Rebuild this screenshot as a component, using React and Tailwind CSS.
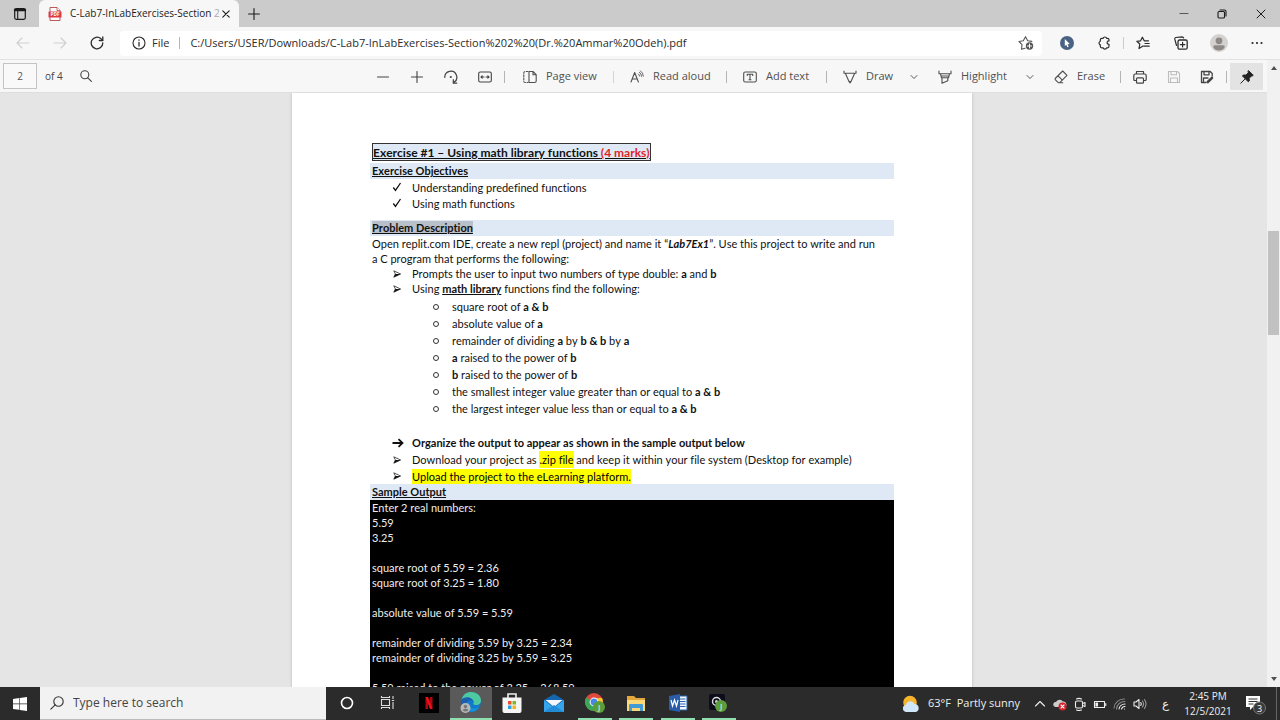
import React from "react";

function Icon({ children, className = "size-4", viewBox = "0 0 16 16" }) {
  return (
    <svg viewBox={viewBox} className={`shrink-0 ${className}`} fill="none" stroke="currentColor" strokeWidth="1.1" strokeLinecap="round" strokeLinejoin="round" aria-hidden="true">
      {children}
    </svg>
  );
}

function IconButton({ label, className = "w-[34px]", children }) {
  return (
    <button type="button" aria-label={label} className={`flex h-full shrink-0 items-center justify-center ${className}`}>
      {children}
    </button>
  );
}

function LabelButton({ label, className, children }) {
  return (
    <button type="button" className={`flex h-full shrink-0 items-center gap-[9px] whitespace-nowrap text-[11px] text-[#505050] ${className}`}>
      {children}
      {label}
    </button>
  );
}

function Sep({ className = "" }) {
  return <div className={`h-3 w-px shrink-0 bg-[#b4b4b4] ${className}`} />;
}

function ChevronDown() {
  return (
    <Icon className="size-2" viewBox="0 0 8 8">
      <path d="M1 2.5 4 5.5 7 2.5" strokeWidth="0.9" />
    </Icon>
  );
}

function TabStrip() {
  return (
    <header className="flex h-[27px] shrink-0 items-center bg-[#cbcbcb] text-[#1b1b1b]">
      <IconButton label="Tab actions" className="w-[39px]">
        <Icon className="size-3.5" viewBox="0 0 14 14">
          <rect x="1.7" y="1.7" width="10.6" height="10.6" rx="1.5" strokeWidth="1.2" />
          <path d="M2 3h10" strokeWidth="2.4" />
          <path d="M4.7 4v8" />
        </Icon>
      </IconButton>
      <div className="flex h-full w-[200px] shrink-0 items-center rounded-t-md bg-[#f7f7f7] pl-[9px]">
        <svg viewBox="0 0 14 14" className="size-3.5 shrink-0" aria-hidden="true">
          <path d="M2 .5h7L12 3.500V13.500H2z" fill="#fff" stroke="#a33" strokeWidth=".8" />
          <path d="M9 .5V3.500h3" fill="#fff" stroke="#a33" strokeWidth=".7" />
          <rect x="0.500" y="4.500" width="13" height="6" rx=".6" fill="#dc3b42" />
          <text x="7" y="9.200" textAnchor="middle" fontSize="4.600" fontWeight="700" fill="#fff" fontFamily="Open Sans, sans-serif">PDF</text>
        </svg>
        <span className="ml-2 min-w-0 flex-1 text-[10px] whitespace-nowrap">
          C-Lab7-InLabExercises-Section <span className="text-[#aaa]">2</span>
        </span>
        <IconButton label="Close tab" className="w-[26px]">
          <Icon className="size-2" viewBox="0 0 8 8"><path d="m.8.8 6.400 6.400M7.200.8.8 7.200" /></Icon>
        </IconButton>
      </div>
      <IconButton label="New tab" className="w-[30px]">
        <Icon className="size-3" viewBox="0 0 12 12"><path d="M6 .6v10.800M.6 6h10.800" /></Icon>
      </IconButton>
      <div className="ml-auto flex h-full">
        <IconButton label="Minimize" className="w-[38px]">
          <Icon className="size-2.5 text-[#555]" viewBox="0 0 10 10"><path d="M1 4.500h8" strokeWidth="1" /></Icon>
        </IconButton>
        <IconButton label="Restore" className="w-[38px]">
          <Icon className="size-2.5" viewBox="0 0 10 10">
            <rect x="1" y="2.500" width="6.500" height="6.500" rx="1" />
            <path d="M3 1h4.500Q9 1 9 2.500V7" />
          </Icon>
        </IconButton>
        <IconButton label="Close" className="w-[39px]">
          <Icon className="size-2.5" viewBox="0 0 10 10"><path d="m1 1 8 8M9 1 1 9" strokeWidth="1" /></Icon>
        </IconButton>
      </div>
    </header>
  );
}

function AddressBar() {
  return (
    <div className="flex h-8 shrink-0 items-center bg-[#f7f7f7] pl-1 text-[#2b2b2b]">
      <IconButton label="Back" className="w-[37px] text-[#cfcfcf]">
        <Icon className="size-3.5" viewBox="0 0 14 14"><path d="M13 7H1M6 2 1 7l5 5" /></Icon>
      </IconButton>
      <IconButton label="Forward" className="w-[37px] text-[#cfcfcf]">
        <Icon className="size-3.5" viewBox="0 0 14 14"><path d="M1 7h12M8 2l5 5-5 5" /></Icon>
      </IconButton>
      <IconButton label="Refresh" className="w-[37px]">
        <Icon className="size-3.5" viewBox="0 0 14 14">
          <path d="M12.800 7A5.800 5.800 0 1 1 10.800 2.600L12.600 4.400" strokeWidth="1.300" />
          <path d="M12.800 1v3.500H9.300" strokeWidth="1.300" />
        </Icon>
      </IconButton>
      <div className="ml-[5px] flex h-[25px] min-w-0 flex-1 items-center rounded bg-white pl-3">
        <Icon className="size-3.5" viewBox="0 0 14 14">
          <circle cx="7" cy="7" r="6" />
          <path d="M7 6.300v3.800M7 4v.3" strokeWidth="1.300" />
        </Icon>
        <span className="ml-1.5 text-[11px]">File</span>
        <Sep className="ml-2.5 bg-[#777]" />
        <input aria-label="Address" defaultValue="C:/Users/USER/Downloads/C-Lab7-InLabExercises-Section%202%20(Dr.%20Ammar%20Odeh).pdf" className="ml-2.5 min-w-0 flex-1 bg-transparent text-[11px] outline-none" />
        <IconButton label="Add to favorites" className="w-8">
          <Icon className="size-4 text-[#555]">
            <path d="M7 13.200 3.500 14.200 4 9.700 1 6.500 5.300 5.700 7.500 1.700 9.700 5.700 13.800 6.400" />
            <circle cx="11.500" cy="11" r="3.700" fill="currentColor" stroke="none" />
            <path d="M11.500 9v4M9.500 11h4" stroke="#fff" strokeWidth="1" />
          </Icon>
        </IconButton>
      </div>
      <div className="ml-1.5 flex h-full items-center">
        <IconButton label="Cursor extension" className="w-[37px]">
          <svg viewBox="0 0 14 14" className="size-3.5" aria-hidden="true">
            <circle cx="7" cy="7" r="7" fill="#4b6383" />
            <path d="m4.800 3 5 5-2.200.2 1 2.500-1.300.5-1-2.500-1.500 1.300z" fill="#fff" />
          </svg>
        </IconButton>
        <IconButton label="Extensions" className="w-[38px]">
          <Icon className="size-3.5" viewBox="0 0 14 14">
            <path d="M3.300 3.800q0-1.500 1.500-1.500h1.300a1.900 1.900 0 0 1 3.600 0h.8q1.500 0 1.500 1.500v1.100a1.700 1.700 0 0 0-1 3.200q.5.300 1 .2v2q0 1.500-1.500 1.500h-.8a1.900 1.900 0 0 1-3.600 0H4.800q-1.500 0-1.500-1.500V8.900a1.900 1.900 0 0 1 0-3.600z" strokeWidth="1.200" />
          </Icon>
        </IconButton>
        <Sep className="bg-[#ccc]" />
        <IconButton label="Favorites" className="w-[38px]">
          <Icon className="size-3.5" viewBox="0 0 14 14">
            <path d="M7 10 3 12.500 3.800 8 .8 5.300 4.600 4.800 6.400 1.200 8.200 4.800H12.500M9 7.500h4.200M8 10.200h5.200" strokeWidth="1.200" />
          </Icon>
        </IconButton>
        <IconButton label="Collections" className="w-[38px]">
          <Icon className="size-3.5" viewBox="0 0 14 14">
            <rect x="4" y="4" width="9.200" height="9.200" rx="1.500" strokeWidth="1.300" />
            <path d="M8.600 6.300v4.600M6.300 8.600h4.600M2.500 9.500.8 3.200q-.2-1.400 1-1.700L8 .8q1.300 0 1.600 1.200" strokeWidth="1.200" />
          </Icon>
        </IconButton>
        <IconButton label="Profile" className="w-[38px]">
          <svg viewBox="0 0 18 18" className="size-[18px]" aria-hidden="true">
            <circle cx="9" cy="9" r="9" fill="#d4d1ce" />
            <circle cx="9" cy="6.800" r="3.400" fill="#8d8986" />
            <path d="M3.200 13q0-1.800 1.800-1.800h8q1.800 0 1.800 1.800-1.700 3.500-5.800 3.500T3.200 13z" fill="#8d8986" />
          </svg>
        </IconButton>
        <IconButton label="Settings and more" className="mr-1 w-[38px]">
          <Icon className="size-3" viewBox="0 0 12 12">
            <path d="M1.500 6h.01M6 6h.01M10.500 6h.01" strokeWidth="2.200" />
          </Icon>
        </IconButton>
      </div>
    </div>
  );
}

function PdfToolbar() {
  return (
    <div className="flex h-[33px] shrink-0 items-center border-b border-[#dedede] bg-[#f7f7f7] pl-[3px] text-[#444]">
      <input aria-label="Page number" defaultValue="2" className="h-[26px] w-[34px] shrink-0 border border-[#c4c4c4] bg-[#f9f9f9] text-center text-[10px] text-[#555] outline-none" />
      <span className="ml-2 text-[10px] whitespace-nowrap">of 4</span>
      <IconButton label="Find" className="ml-1.5 w-[34px]">
        <Icon className="size-3" viewBox="0 0 12 12"><circle cx="4.800" cy="4.800" r="4" /><path d="m7.800 7.800 3.600 3.600" /></Icon>
      </IconButton>
      <div className="mr-1 ml-auto flex h-full items-center pt-px">
        <IconButton label="Zoom out"><Icon className="size-3" viewBox="0 0 12 12"><path d="M.5 6h11" /></Icon></IconButton>
        <IconButton label="Zoom in"><Icon className="size-3" viewBox="0 0 12 12"><path d="M.5 6h11M6 .5v11" /></Icon></IconButton>
        <IconButton label="Rotate">
          <Icon className="size-3.5" viewBox="0 0 14 14">
            <path d="M.8 7.500A6 6 0 1 1 10 12.300M9.300 9.600v3.600h3.400" strokeWidth="1.200" />
            <circle cx="6.800" cy="7" r="1.100" fill="currentColor" stroke="none" />
          </Icon>
        </IconButton>
        <IconButton label="Fit to width">
          <Icon className="size-3.5" viewBox="0 0 14 14">
            <rect x=".7" y="2" width="12.600" height="10" rx="1.500" />
            <path d="M3 7h3M4.200 5.800 3 7l1.200 1.200M11 7H8M9.800 5.800 11 7 9.800 8.200" />
          </Icon>
        </IconButton>
        <Sep className="mx-0.5" />
        <LabelButton label="Page view" className="w-[106px] pl-4">
          <Icon className="size-3.5" viewBox="0 0 14 14">
            <path d="M5 1.500H2.500Q.8 1.500.8 3v8q0 1.500 1.700 1.500H5" strokeDasharray="1.800 1.500" />
            <path d="M6 1.500h4l3.200 3.200v6.300q0 1.500-1.500 1.500H6zM10 1.500v3.200h3.200" />
          </Icon>
        </LabelButton>
        <Sep className="bg-[#d4d4d4]" />
        <LabelButton label="Read aloud" className="w-[112px] pl-4">
          <Icon className="size-3.5" viewBox="0 0 14 14">
            <path d="M1 12 4.700 2.500 8.400 12M2.300 9h4.800" />
            <path d="M8.500 4q1 .8 1 2M9.500 2.300q2 1.500 2 4M10.500.8q2.800 2 2.800 5.400" strokeWidth=".9" />
          </Icon>
        </LabelButton>
        <Sep />
        <LabelButton label="Add text" className="w-[99px] pl-4">
          <Icon className="size-3.5" viewBox="0 0 14 14">
            <rect x=".7" y="2" width="12.600" height="10" rx="1.500" />
            <path d="M4.300 5.500V4.300h5.400v1.200M7 4.300v5.500M6 9.800h2" />
          </Icon>
        </LabelButton>
        <Sep />
        <LabelButton label="Draw" className="w-[75px] pl-4">
          <Icon className="size-3.5" viewBox="0 0 14 14">
            <path d="M1 1v2.300h12V1M2.300 3.300 6 11.500h2l3.700-8.200M6 11.500l1 1.500 1-1.500" />
          </Icon>
        </LabelButton>
        <IconButton label="Draw options" className="w-6"><ChevronDown /></IconButton>
        <LabelButton label="Highlight" className="w-[92px] pl-3">
          <Icon className="size-3.5" viewBox="0 0 14 14">
            <path d="M1 1v2.800h12V1M2.500 3.800l1 4h7l1-4M4 7.800v5.400l5.800-2.400v-3M3 6h8" />
          </Icon>
        </LabelButton>
        <IconButton label="Highlight options" className="w-6"><ChevronDown /></IconButton>
        <LabelButton label="Erase" className="w-[78px] pl-3">
          <Icon className="size-3.5" viewBox="0 0 14 14">
            <path d="M8.700 1 13 5.300 5.800 12.700H4.300L1.200 9.600V8.500zM4 5.800l4.400 4.400M5.800 12.700h3" />
          </Icon>
        </LabelButton>
        <Sep className="mr-0.5" />
        <IconButton label="Print">
          <Icon className="size-3.5" viewBox="0 0 14 14">
            <path d="M3.500 4V1.500h7V4M3.500 10.500H1.800Q.8 10.500.8 9.500v-4Q.8 4 2.300 4h9.400q1.500 0 1.500 1.500v4q0 1-1 1h-1.700" strokeWidth="1.200" />
            <rect x="3.500" y="7.800" width="7" height="5.400" rx="1" strokeWidth="1.200" />
          </Icon>
        </IconButton>
        <IconButton label="Save" className="w-[33px] text-[#bdbdbd]">
          <Icon className="size-3.5" viewBox="0 0 14 14">
            <path d="M1.500 1.500h9l2 2v9h-11zM4 1.500v3.300h5.500V1.500M3.500 12.500V8h7v4.500" />
          </Icon>
        </IconButton>
        <IconButton label="Save as">
          <Icon className="size-3.5" viewBox="0 0 14 14">
            <path d="M6 12.500H1.500v-11h8.700l2 2V6M4 1.500v3.300h5V1.500M3.500 12.500V8H8" strokeWidth="1.300" />
            <path d="m7.800 12 4.200-4.200" strokeWidth="2.600" />
          </Icon>
        </IconButton>
        <Sep className="mr-[3px] ml-0.5" />
        <button type="button" aria-label="Unpin toolbar" className="flex h-[27px] w-[33px] shrink-0 items-center justify-center bg-[#e3e3e3] text-[#222]">
          <Icon className="size-3.5" viewBox="0 0 14 14">
            <path d="m8.700.8 4.500 4.500-1 .7-.7-.1-2.300 2.400.1 2.600-1 .9L2.500 6l.8-1 2.700.1 2.300-2.500-.2-.9zM5.200 8.800.8 13.200" fill="currentColor" strokeWidth="1" />
          </Icon>
        </button>
      </div>
    </div>
  );
}

function SectionBar({ children, className = "" }) {
  return <h2 className={`h-4 bg-[#dee9f5] pl-0.5 leading-4 font-bold underline ${className}`}>{children}</h2>;
}

function Arrowhead() {
  return (
    <svg viewBox="0 0 10 10" className="ml-px size-2 shrink-0" aria-hidden="true">
      <path d="M1 1 9.500 5 1 9 3 5z" fill="none" stroke="#111" strokeWidth=".9" strokeLinejoin="round" />
      <path d="M3 5h6.500L1 9z" fill="#111" />
    </svg>
  );
}

function Check() {
  return (
    <svg viewBox="0 0 10 10" className="size-2.5 shrink-0" aria-hidden="true">
      <path d="M1.300 5.500 3.500 8.300 8.500 1" fill="none" stroke="#111" strokeWidth="1.300" />
    </svg>
  );
}

function BoldArrow() {
  return (
    <svg viewBox="0 0 12 10" className="h-2.5 w-3 shrink-0" aria-hidden="true">
      <path d="M.5 5H10M6.500 1.200 10.500 5 6.500 8.800" fill="none" stroke="#111" strokeWidth="1.800" />
    </svg>
  );
}

function Bullet({ mark, children, className = "h-[17px] leading-[17px]" }) {
  return (
    <li className={`flex items-center pl-[22px] whitespace-nowrap ${className}`}>
      <span className="flex w-5 shrink-0 items-center">{mark}</span>
      <span>{children}</span>
    </li>
  );
}

const subItems = [
  <>square root of <b>a &amp; b</b></>,
  <>absolute value of <b>a</b></>,
  <>remainder of dividing <b>a</b> by <b>b &amp; b</b> by <b>a</b></>,
  <><b>a</b> raised to the power of <b>b</b></>,
  <><b>b</b> raised to the power of <b>b</b></>,
  <>the smallest integer value greater than or equal to <b>a &amp; b</b></>,
  <>the largest integer value less than or equal to <b>a &amp; b</b></>,
];

const output = `Enter 2 real numbers:
5.59
3.25

square root of 5.59 = 2.36
square root of 3.25 = 1.80

absolute value of 5.59 = 5.59

remainder of dividing 5.59 by 3.25 = 2.34
remainder of dividing 3.25 by 5.59 = 3.25

5.59 raised to the power of 3.25 = 268.59`;

function Document() {
  return (
    <main className="min-h-0 flex-1 overflow-hidden bg-[#e5e5e5] pr-[3px]">
      <article className="mx-auto w-full max-w-[680px] bg-white px-[78px] pt-[50px] font-['Lato','Liberation_Sans',sans-serif] text-[11px] leading-[15px] text-[#111] shadow-[0_0_3px_#bbb] [font-kerning:none] [font-variant-ligatures:none]">
        <h1 className="ml-0.5 h-[18px] w-fit border border-[#333] bg-[#dee9f5] text-[12px] leading-[17px] font-bold whitespace-nowrap underline">
          Exercise #1 – Using math library functions <span className="text-[#e01f26]">(4 marks)</span>
        </h1>
        <SectionBar className="mt-0.5">Exercise Objectives</SectionBar>
        <ul>
          <Bullet mark={<Check />} className="h-4">Understanding predefined functions</Bullet>
          <Bullet mark={<Check />} className="h-4">Using math functions</Bullet>
        </ul>
        <SectionBar className="mt-[9px]"><span className="bg-[#b9c0c9]">Problem Description</span></SectionBar>
        <p className="pl-0.5 whitespace-nowrap">
          Open replit.com IDE, create a new repl (project) and name it “<b><i>Lab7Ex1</i></b>”. Use this project to write and run
          <br />a C program that performs the following:
        </p>
        <ul>
          <Bullet mark={<Arrowhead />} className="h-[15px]">Prompts the user to input two numbers of type double: <b>a</b> and <b>b</b></Bullet>
          <Bullet mark={<Arrowhead />} className="h-[15px]">Using <b className="underline">math library</b> functions find the following:</Bullet>
        </ul>
        <ul className="mt-0.5 mb-[17px] pl-10">
          {subItems.map((item, i) => (
            <Bullet key={i} mark={<span className="ml-px size-[6px] rounded-full border border-[#333]" />}>{item}</Bullet>
          ))}
        </ul>
        <ul>
          <Bullet mark={<BoldArrow />}><b>Organize the output to appear as shown in the sample output below</b></Bullet>
          <Bullet mark={<Arrowhead />}>Download your project as <mark className="bg-[#ffff00] py-0.5">.zip file</mark> and keep it within your file system (Desktop for example)</Bullet>
          <Bullet mark={<Arrowhead />} className="h-4"><mark className="bg-[#ffff00] py-px">Upload the project to the eLearning platform.</mark></Bullet>
        </ul>
        <SectionBar>Sample Output</SectionBar>
        <pre className="bg-black pl-0.5 font-['Lato','Liberation_Sans',sans-serif] text-[#eee]">{output}</pre>
      </article>
    </main>
  );
}

function Scrollbar() {
  return (
    <div className="flex w-[13px] shrink-0 flex-col items-center bg-[#f1f1f1] py-1.5" aria-hidden="true">
      <svg viewBox="0 0 6 4" className="h-1 w-1.5"><path d="M0 4 3 0l3 4z" fill="#505050" /></svg>
      <div className="mt-[161px] h-[104px] w-[11px] bg-[#c1c1c1]" />
      <svg viewBox="0 0 6 4" className="mt-auto h-1 w-1.5"><path d="M0 0 3 4 6 0z" fill="#505050" /></svg>
    </div>
  );
}

function JBadge({ x = 9, y = 10 }) {
  return (
    <g>
      <circle cx={x + 6} cy={y + 5} r="6" fill="#5c9e3b" />
      <text x={x + 6} y={y + 8} textAnchor="middle" fontSize="8" fill="#fff" fontFamily="Open Sans, sans-serif">J</text>
    </g>
  );
}

const apps = [
  { name: "Cortana", art: <circle cx="11" cy="11" r="5.500" fill="none" stroke="#fff" strokeWidth="1.600" /> },
  {
    name: "Task View",
    art: (
      <path d="M4.500 7.500h8v6h-8zM4.500 4v1.500h8V4M4.500 17v-1.500h8V17M16 4v3M16 10v7M14.800 8.500h2.400" fill="none" stroke="#ddd" strokeWidth="1.100" />
    ),
  },
  {
    name: "Netflix",
    art: (
      <>
        <rect x="1" y="1" width="20" height="20" fill="#000" />
        <path d="M7.500 5H10v12H7.500zM12 5h2.500v12H12z" fill="#b0060f" />
        <path d="M7.500 5H10l4.500 12H12z" fill="#f0111d" />
      </>
    ),
  },
  {
    name: "Microsoft Edge", active: true, underline: "w-full",
    art: (
      <>
        <circle cx="11" cy="10" r="10" fill="#1479c9" />
        <path d="M1.500 8C3 2 7 0 11 0c6 0 10 4 10 8.500 0 3.500-3 5-6 4.500-2-.4-2-1.500-1-3C13 6 6 4 1.500 8z" fill="#4cc9a0" />
        <path d="M1.500 7.500C5 4 12 4.500 13 9c-3-2-7 0-6 5 .6 3 4 5.500 8 5C8 22 .5 17 1 10z" fill="#1c5fae" />
        <path d="M9 9.500c-1.500 3 1 7 5 7 2.500 0 4.500-1 5.500-2-1.500 4-6 6-10 5-4-2-4-8-.5-10z" fill="#1292dd" />
        <circle cx="5.500" cy="16" r="5" fill="#b9b9b9" />
        <circle cx="5.500" cy="14.500" r="1.700" fill="#777" />
        <path d="M2.500 18q3-3 6 0-3 3-6 0z" fill="#777" />
      </>
    ),
  },
  {
    name: "Microsoft Store",
    art: (
      <>
        <path d="M7 6V2h8v4" fill="none" stroke="#eee" strokeWidth="1.600" />
        <path d="M1.500 5.500h19V19q0 2-2 2h-15q-2 0-2-2z" fill="#f5f5f5" />
        <path d="M7 9h3.500v3.500H7z" fill="#e8512b" /><path d="M11.500 9H15v3.500h-3.500z" fill="#7bb928" />
        <path d="M7 13.500h3.500V17H7z" fill="#2aa0e4" /><path d="M11.500 13.500H15V17h-3.500z" fill="#f4b51d" />
      </>
    ),
  },
  {
    name: "Mail",
    art: (
      <>
        <path d="M1 8 11 2l10 6v11H1z" fill="#1466b0" />
        <path d="M2.500 8h17L11 15z" fill="#f3f6fa" />
        <path d="M1 8l10 7.500L21 8v12H1z" fill="#36a5ec" />
        <path d="M1 20 11 13l10 7z" fill="#238bd5" />
      </>
    ),
  },
  {
    name: "Google Chrome", underline: "w-[34px]",
    art: (
      <>
        <circle cx="10" cy="10" r="9" fill="#e0493d" />
        <path d="M10 10 2.200 5.500A9 9 0 0 0 10 19l4-7z" fill="#3ba757" />
        <path d="M10 6h8A9 9 0 0 1 10 19l4-7z" fill="#f7c52d" />
        <circle cx="10" cy="10" r="4.400" fill="#fff" /><circle cx="10" cy="10" r="3.400" fill="#4587ee" />
        <JBadge />
      </>
    ),
  },
  {
    name: "File Explorer", underline: "w-[34px]",
    art: (
      <>
        <path d="M2 4h7l2 2h9v13H2z" fill="#e4a83a" />
        <path d="M2 8h18v11H2z" fill="#fbd978" />
        <path d="M4 19v-6q0-1 1-1h12q1 0 1 1v6h-3v-3H7v3z" fill="#449bd4" />
      </>
    ),
  },
  {
    name: "Word", underline: "w-[34px]",
    art: (
      <>
        <path d="M12 4h8v14h-8z" fill="#f4f7fc" stroke="#2b63ab" />
        <path d="M13 7h5.500M13 9.500h5.500M13 12h5.500M13 14.500h5.500" stroke="#2b63ab" />
        <path d="M2 4 13 2v18L2 18z" fill="#2a5caa" />
        <path d="m4 8 1.500 6L7.500 8l2 6L11 8" fill="none" stroke="#fff" strokeWidth="1.200" />
      </>
    ),
  },
  {
    name: "Camera app", underline: "w-[34px]",
    art: (
      <>
        <rect x="1" y="2" width="16" height="16" rx="2" fill="#0c0c1b" />
        <circle cx="8.500" cy="9.500" r="4" fill="none" stroke="#ddd" strokeWidth="1.500" />
        <circle cx="8.500" cy="9.500" r="1.500" fill="#ddd" />
        <JBadge x={7} y={9} />
      </>
    ),
  },
];

function TrayIcon({ label, children, className = "w-5" }) {
  return (
    <IconButton label={label} className={className}>
      <Icon className="size-3.5" viewBox="0 0 14 14">{children}</Icon>
    </IconButton>
  );
}

function Taskbar() {
  return (
    <footer className="flex h-[33px] shrink-0 items-center bg-[#2b2b2b] text-[#eee]">
      <IconButton label="Start" className="w-10">
        <svg viewBox="0 0 14 14" className="size-3.5" aria-hidden="true">
          <path d="M0 2 6.200 1.100v5.500H0zM6.800 1 14 0v6.600H6.800zM0 7.300h6.200v5.500L0 12zM6.800 7.300H14V14L6.800 13z" fill="#fff" />
        </svg>
      </IconButton>
      <label className="flex h-full w-[286px] items-center border-b border-[#bbb] bg-[#f2f2f2] pl-2.5 text-[#333]">
        <Icon className="size-3.5" viewBox="0 0 14 14"><circle cx="8.500" cy="5.500" r="4.700" /><path d="M5.200 8.800.8 13.200" /></Icon>
        <input aria-label="Search" placeholder="Type here to search" className="ml-[9px] min-w-0 flex-1 bg-transparent text-[12px] outline-none placeholder:text-[#444]" />
      </label>
      <nav className="grid h-full w-[414px] shrink-0 grid-cols-10">
        {apps.map((app) => (
          <button key={app.name} type="button" aria-label={app.name} className={`flex flex-col items-center justify-end ${app.active ? "bg-[#5a5a5a]" : ""}`}>
            <svg viewBox="0 0 22 22" className="mb-1 size-[22px]" aria-hidden="true">{app.art}</svg>
            <span className={`h-0.5 ${app.underline ? `${app.underline} bg-[#8fe0ae]` : ""}`} />
          </button>
        ))}
      </nav>
      <div className="ml-auto flex h-full items-center">
        <button type="button" className="flex h-full items-center gap-2 text-[11px] whitespace-nowrap">
          <svg viewBox="0 0 18 18" className="size-[18px]" aria-hidden="true">
            <circle cx="8" cy="7.500" r="6.800" fill="#f7b52c" />
            <path d="M4 17a3.700 3.700 0 0 1 0-7.300 4.700 4.700 0 0 1 8.700-.8A4.200 4.200 0 0 1 14 17z" fill="#cfe7f8" />
          </svg>
          <span>63°F&nbsp; Partly sunny</span>
        </button>
        <TrayIcon label="Show hidden icons" className="ml-2.5 w-5"><path d="m2.500 9 4.500-4.500L11.500 9" /></TrayIcon>
        <TrayIcon label="OneDrive error">
          <path d="M2.500 10a2.500 2.500 0 0 1 .5-5 4 4 0 0 1 7-.5A3 3 0 0 1 12 10z" fill="#ccc" stroke="none" />
          <circle cx="9.500" cy="9.500" r="4" fill="#d5212c" stroke="none" />
          <path d="m8 8 3 3M11 8l-3 3" stroke="#fff" />
        </TrayIcon>
        <TrayIcon label="Meet now"><rect x="2.500" y="4" width="7" height="7" rx="1.500" /><path d="m9.500 6.500 2.500-1v4l-2.500-1M3.500 2q2.500-1.300 5 0M3.500 13q2.500 1 5 0" /></TrayIcon>
        <TrayIcon label="Battery"><path d="M1.500 4.500h10v6h-10zM12.800 6.500v2" /><path d="M3 6h1.500v3H3z" fill="currentColor" /></TrayIcon>
        <TrayIcon label="Network">
          <path d="M1 11A10 10 0 0 1 11.500 2M3.500 12A8 8 0 0 1 12 4.500" stroke="#888" />
          <path d="M6 12a6 6 0 0 1 6-5M8.500 12a3.500 3.500 0 0 1 3.500-2.500M11.500 12h.01" />
        </TrayIcon>
        <TrayIcon label="Volume">
          <path d="M1 5h2l3-2.500v9L3 9H1zM7.800 5.500q1 1.500 0 3" />
          <path d="M9.500 4q2 3 0 6M11.500 2.500q3 4.500 0 9" stroke="#999" />
        </TrayIcon>
        <button type="button" aria-label="Input language" className="h-full w-[30px] text-[12px]">ع</button>
        <button type="button" className="flex h-full w-[56px] flex-col items-center justify-center text-[10px] leading-[15px] whitespace-nowrap">
          <span>2:45 PM</span>
          <span>12/5/2021</span>
        </button>
        <IconButton label="3 notifications" className="w-10">
          <svg viewBox="0 0 22 22" className="size-[22px]" aria-hidden="true">
            <path d="M1 3h14v11H8l-3 3v-3H1z" fill="#fff" />
            <path d="M3.500 6h9M3.500 8.500h9M3.500 11h5" stroke="#333" />
            <circle cx="14.500" cy="15" r="6" fill="#3a3a3a" stroke="#777" />
            <text x="14.500" y="18.500" textAnchor="middle" fontSize="9" fill="#fff" fontFamily="Open Sans, sans-serif">3</text>
          </svg>
        </IconButton>
        <button type="button" aria-label="Show desktop" className="h-full w-1 border-l border-[#666]" />
      </div>
    </footer>
  );
}

export default function App() {
  return (
    <div className="flex h-screen flex-col overflow-hidden bg-[#f7f7f7] font-['Open_Sans','Noto_Sans',sans-serif]">
      <TabStrip />
      <AddressBar />
      <div className="flex min-h-0 flex-1 border-t border-[#e2e2e2]">
        <div className="flex min-w-0 flex-1 flex-col">
          <PdfToolbar />
          <Document />
        </div>
        <Scrollbar />
      </div>
      <Taskbar />
    </div>
  );
}
